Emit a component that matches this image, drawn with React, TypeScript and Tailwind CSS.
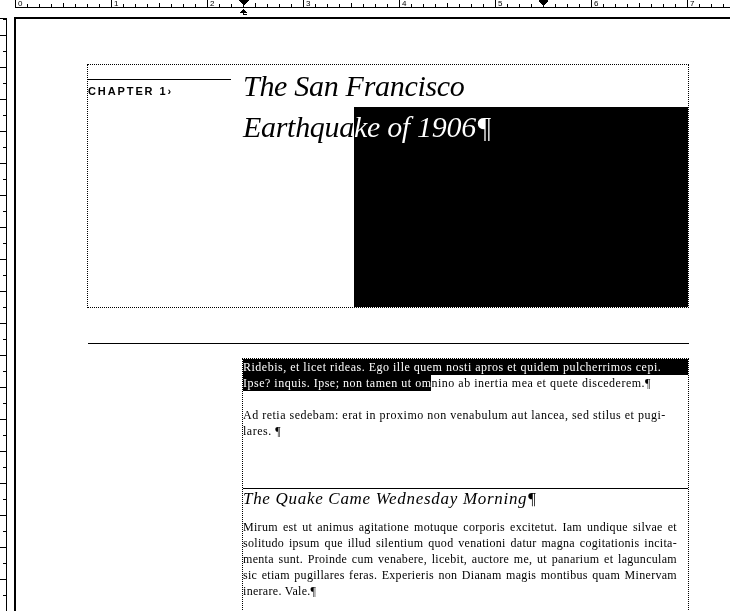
import React from 'react'

function TopRuler() {
  const ticks = []
  for (let j = 0; 15 + j * 12 <= 730; j++) {
    const x = 15 + j * 12 + 0.5
    const major = j % 8 === 0
    const half = j % 8 === 4
    ticks.push(
      <line key={j} x1={x} x2={x} y1={major ? 0 : half ? 3 : 4} y2={7} stroke="black" strokeWidth={1} />
    )
  }
  const labels = [0, 1, 2, 3, 4, 5, 6, 7]
  return (
    <svg width={730} height={17} className="block shrink-0" shapeRendering="crispEdges">
      <line x1={15} x2={730} y1={7.5} y2={7.5} stroke="black" />
      {ticks}
      {labels.map((n) => (
        <text key={n} x={15 + n * 96 + 3} y={6} fontSize={8} fontFamily="'Liberation Sans', sans-serif" fill="black">
          {n}
        </text>
      ))}
      {/* left indent / first line markers */}
      <polygon points="238,0 249,0 243.5,5.5" fill="black" />
      <line x1={243.5} x2={243.5} y1={4} y2={7} stroke="black" />
      <polygon points="243.5,9 240,12.5 247,12.5" fill="black" />
      <line x1={243.5} x2={243.5} y1={11} y2={15} stroke="black" />
      <line x1={243} x2={247} y1={14.5} y2={14.5} stroke="black" />
      {/* right indent marker */}
      <path d="M539,0 L548,0 L548,1.5 L543.5,5.5 L539,1.5 Z" fill="black" />
      <line x1={543.5} x2={543.5} y1={4} y2={7} stroke="black" />
    </svg>
  )
}

function LeftRuler() {
  const ticks = []
  for (let j = 0; 19 + j * 16 <= 611; j++) {
    const y = 2 + j * 16 + 0.5
    const full = j % 2 === 1
    ticks.push(<line key={j} x1={full ? 0 : 3} x2={6} y1={y} y2={y} stroke="black" />)
  }
  return (
    <svg width={8} height={594} className="block shrink-0" shapeRendering="crispEdges">
      <line x1={0} x2={7} y1={1.5} y2={1.5} stroke="black" />
      <line x1={6.5} x2={6.5} y1={1} y2={594} stroke="black" />
      {ticks}
    </svg>
  )
}

const justified = 'text-justify [text-align-last:justify]'

export default function App() {
  return (
    <div className="w-[730px] h-[611px] overflow-hidden bg-white text-black flex flex-col">
      <TopRuler />
      <div className="flex flex-1 min-h-0">
        <LeftRuler />
        <div className="ml-[6px] flex-1 border-t-2 border-l-2 border-black flex flex-col">
          {/* chapter head frame */}
          <div className="relative ml-[71px] mt-[45px] w-[602px] h-[244px] shrink-0 border border-dotted border-black flex">
            <div className="w-[143px] pt-[14px]">
              <div className="border-t border-black" />
              <div className="mt-[6px] font-['Liberation_Sans',sans-serif] text-[11px] font-bold tracking-[1.9px] leading-none">
                CHAPTER 1›
              </div>
            </div>
            <div className="ml-[12px] font-['Liberation_Serif',serif] italic text-[30px] leading-[41px] tracking-[-0.3px] whitespace-nowrap">
              <div>The San Francisco</div>
              <div>Earthquake of 1906¶</div>
            </div>
            <div className="absolute right-0 bottom-0 w-[334px] h-[200px] bg-white mix-blend-difference" />
          </div>

          <div className="ml-[72px] mt-[35px] w-[601px] shrink-0 border-t border-black" />

          {/* story frame */}
          <div className="ml-[226px] mt-[14px] w-[447px] h-[300px] shrink-0 border border-b-0 border-dotted border-black font-['Liberation_Serif',serif] text-[12px] leading-[16px] tracking-[0.5px] whitespace-nowrap">
            <div className="bg-black text-white">
              Ridebis, et licet rideas. Ego ille quem nosti apros et quidem pulcherrimos cepi.
            </div>
            <div>
              <span className="bg-black text-white inline-block">Ipse? inquis. Ipse; non tamen ut om</span>
              nino ab inertia mea et quete discederem.¶
            </div>
            <div className="h-[16px]" />
            <div>Ad retia sedebam: erat in proximo non venabulum aut lancea, sed stilus et pugi-</div>
            <div>lares. ¶</div>

            <div className="mt-[49px] border-t border-black">
              <div className="italic text-[17px] leading-[20px] tracking-[0.7px]">
                The Quake Came Wednesday Morning¶
              </div>
            </div>

            <div className="mt-[10px] w-[434px] tracking-[0.3px]">
              <div className={justified}>
                Mirum est ut animus agitatione motuque corporis excitetut. Iam undique silvae et
              </div>
              <div className={justified}>
                solitudo ipsum que illud silentium quod venationi datur magna cogitationis incita-
              </div>
              <div className={justified}>
                menta sunt. Proinde cum venabere, licebit, auctore me, ut panarium et lagunculam
              </div>
              <div className={justified}>
                sic etiam pugillares feras. Experieris non Dianam magis montibus quam Minervam
              </div>
              <div>inerare. Vale.¶</div>
            </div>
          </div>
        </div>
      </div>
    </div>
  )
}
